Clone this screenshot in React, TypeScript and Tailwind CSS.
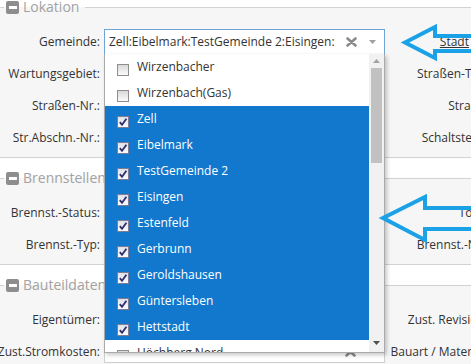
import React from "react";

type Row = { left: string; right: string; link?: boolean; select?: boolean };

const sections: { title: string; rows: Row[] }[] = [
  {
    title: "Lokation",
    rows: [
      { left: "Gemeinde:", right: "Stadt", link: true },
      { left: "Wartungsgebiet:", right: "Straßen-Typ:" },
      { left: "Straßen-Nr.:", right: "Straße:" },
      { left: "Str.Abschn.-Nr.:", right: "Schaltstelle:" },
    ],
  },
  {
    title: "Brennstellen",
    rows: [
      { left: "Brennst.-Status:", right: "Tour:" },
      { left: "Brennst.-Typ:", right: "Brennst.-Nr.:" },
    ],
  },
  {
    title: "Bauteildaten",
    rows: [
      { left: "Eigentümer:", right: "Zust. Revision:" },
      { left: "Zust.Stromkosten:", right: "Bauart / Material:", select: true },
    ],
  },
];

const gemeinden: [string, boolean][] = [
  ["Wirzenbacher", false],
  ["Wirzenbach(Gas)", false],
  ["Zell", true],
  ["Eibelmark", true],
  ["TestGemeinde 2", true],
  ["Eisingen", true],
  ["Estenfeld", true],
  ["Gerbrunn", true],
  ["Geroldshausen", true],
  ["Güntersleben", true],
  ["Hettstadt", true],
  ["Höchberg Nord", false],
];

function ClearIcon() {
  return (
    <svg width="11" height="10" viewBox="0 0 11 10">
      <path d="M1.5 1.5 L9.5 8.5 M9.5 1.5 L1.5 8.5" stroke="#8a8a8a" strokeWidth="2.6" strokeLinecap="round" />
    </svg>
  );
}

function Check({ on }: { on: boolean }) {
  if (!on) {
    return <div className="w-[12px] h-[12px] mt-[6px] shrink-0 border border-[#8e8e8e] bg-linear-to-b from-[#d9d9d9] to-[#fbfbfb]" />;
  }
  return (
    <div className="w-[12px] h-[12px] mt-[6px] shrink-0 border border-[#7c7c94] bg-linear-to-b from-[#dfe0ea] to-[#fbfbff] flex items-center justify-center">
      <svg width="10" height="10" viewBox="0 0 10 10">
        <path d="M1.8 5.2 L4 7.8 L8.4 1.8" stroke="#2e2e6e" strokeWidth="1.8" fill="none" />
      </svg>
    </div>
  );
}

function Dropdown() {
  return (
    <div className="absolute left-[-1px] top-full w-[281px] h-[299px] z-10 bg-white border border-t-0 border-[#aaa] shadow-[2px_2px_4px_rgba(0,0,0,0.22)] flex">
      <div className="flex-1 overflow-hidden">
        {gemeinden.map(([name, on]) => (
          <div
            key={name}
            className={
              "h-[26px] flex items-center gap-[8px] pl-[12px] leading-[18px] " +
              (on ? "bg-[#1178cd] text-white" : "text-[#333]")
            }
          >
            <Check on={on} />
            <span>{name}</span>
          </div>
        ))}
      </div>
      <div className="w-[15px] bg-[#f1f1f1] flex flex-col items-center">
        <div className="h-[14px] flex items-center justify-center">
          <svg width="7" height="4" viewBox="0 0 7 4">
            <path d="M0 4 L3.5 0 L7 4 Z" fill="#a3a3a3" />
          </svg>
        </div>
        <div className="w-[11px] h-[95px] bg-[#c1c1c1]" />
        <div className="flex-1" />
        <div className="h-[18px] flex items-center justify-center">
          <svg width="7" height="4" viewBox="0 0 7 4">
            <path d="M0 0 L7 0 L3.5 4 Z" fill="#505050" />
          </svg>
        </div>
      </div>
    </div>
  );
}

function Field({ open, select }: { open?: boolean; select?: boolean }) {
  if (open) {
    return (
      <div className="relative ml-[4px] w-[281px] h-[26px] shrink-0 bg-white border border-[#6ea5d4] flex items-center pl-[4px] pr-[8px]">
        <span className="flex-1 whitespace-nowrap overflow-hidden">Zell:Eibelmark:TestGemeinde 2:Eisingen:</span>
        <span className="ml-[6px] flex items-center"><ClearIcon /></span>
        <span className="ml-[12px] flex items-center">
          <svg width="7" height="4" viewBox="0 0 7 4">
            <path d="M0 0 L7 0 L3.5 4 Z" fill="#a0a0a0" />
          </svg>
        </span>
        <Dropdown />
      </div>
    );
  }
  return (
    <div className="ml-[4px] w-[281px] h-[22px] shrink-0 bg-white border border-[#cfcfcf] flex items-center justify-end pr-[28px]">
      {select && <ClearIcon />}
    </div>
  );
}

export default function App() {
  return (
    <div className="relative w-[471px] h-[364px] overflow-hidden bg-white font-['Open_Sans',sans-serif] text-[12px] text-[#333]">
      <div className="w-[900px]">
        {sections.map((s, si) => (
          <fieldset
            key={s.title}
            className={
              "border-x-0 border-y border-[#d2d2d2] bg-[#f6f6f6] px-0 pt-[12px] pb-[3px] " +
              (si > 0 ? "mt-[13px]" : "")
            }
          >
            <legend className="ml-[4px] pl-[2px] pr-[6px] leading-none">
              <span className="h-[14px] flex items-center gap-[4px] text-[14px] leading-[14px] text-[#a2a2a2]">
                <span className="w-[13px] h-[13px] rounded-[2px] bg-[#8d8d8d] flex items-center justify-center">
                  <span className="w-[8px] h-[3px] bg-white" />
                </span>
                {s.title}
              </span>
            </legend>
            {s.rows.map((r, ri) => (
              <div key={r.left} className="h-[32px] flex items-center whitespace-nowrap">
                <div className="w-[100px] shrink-0 flex justify-end">{r.left}</div>
                <Field open={si === 0 && ri === 0} select={r.select} />
                <div className="w-[103px] shrink-0 flex justify-end">
                  {r.link ? <span className="underline mr-[19px]">{r.right}</span> : r.right}
                </div>
                <Field />
              </div>
            ))}
          </fieldset>
        ))}
      </div>
      <svg className="absolute left-0 top-0 pointer-events-none z-20" width="471" height="364" viewBox="0 0 471 364">
        <polygon
          points="405,42.5 435,27 435,36 480,36 480,51 435,51 435,58"
          fill="none"
          stroke="#1ba1e6"
          strokeWidth="4"
        />
        <polygon
          points="383,218 425,197 425,208 480,208 480,229 425,229 425,240"
          fill="none"
          stroke="#1ba1e6"
          strokeWidth="4"
        />
      </svg>
    </div>
  );
}
